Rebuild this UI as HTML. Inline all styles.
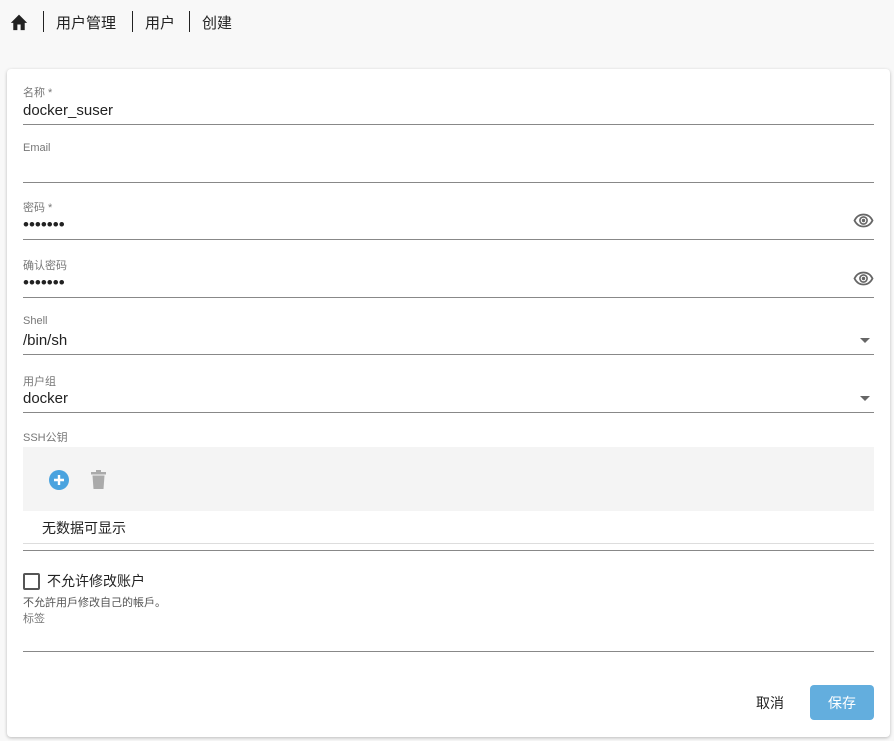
<!DOCTYPE html>
<html><head><meta charset="utf-8"><style>
body{margin:0;width:894px;height:741px;background:#f8f8f8;font-family:"Liberation Sans","Noto Sans CJK SC",sans-serif;position:relative;overflow:hidden;color:#222}
.a{position:absolute}
.bc{font-size:15px;top:12px;color:#222}
.sep{width:1px;height:21px;background:#222;top:11px}
.card{left:7px;top:69px;width:883px;height:668px;background:#fff;border-radius:4px;box-shadow:0 1px 3px rgba(0,0,0,.25)}
.lb{font-size:11px;color:#777;left:23px}
.v{font-size:15px;color:#222;left:23px}
.ln{left:23px;width:851px;height:1px;background:#888}
.dots{font-size:17px;letter-spacing:0px;left:23px;color:#222}
</style></head><body>
<svg class="a" style="left:9px;top:13px" width="20" height="18" viewBox="0 0 24 22"><path d="M10 21v-7h4v7h5v-9h3L12 2 2 12h3v9z" fill="#222"/></svg>
<div class="a sep" style="left:43px"></div>
<div class="a bc" style="left:56px">用户管理</div>
<div class="a sep" style="left:132px"></div>
<div class="a bc" style="left:145px">用户</div>
<div class="a sep" style="left:189px"></div>
<div class="a bc" style="left:202px">创建</div>
<div class="a card"></div>
<div class="a lb" style="top:84px">名称 *</div>
<div class="a v" style="top:102px">docker_suser</div>
<div class="a ln" style="top:124px"></div>
<div class="a lb" style="top:142px">Email</div>
<div class="a ln" style="top:182px"></div>
<div class="a lb" style="top:199px">密码 *</div>
<div class="a dots" style="top:215px">•••••••</div>
<div class="a ln" style="top:239px"></div>
<div class="a lb" style="top:257px">确认密码</div>
<div class="a dots" style="top:273px">•••••••</div>
<div class="a ln" style="top:297px"></div>
<svg class="a" style="left:853px;top:213px" width="21" height="15" viewBox="0 0 21 15"><path d="M1.5 7.5C3.5 3.5 7 1.5 10.5 1.5s7 2 9 6c-2 4-5.5 6-9 6s-7-2-9-6z" fill="none" stroke="#666" stroke-width="1.8"/><circle cx="10.5" cy="7.5" r="3.6" fill="none" stroke="#666" stroke-width="1.6"/><circle cx="10.5" cy="7.5" r="1.7" fill="#666"/></svg>
<svg class="a" style="left:853px;top:271px" width="21" height="15" viewBox="0 0 21 15"><path d="M1.5 7.5C3.5 3.5 7 1.5 10.5 1.5s7 2 9 6c-2 4-5.5 6-9 6s-7-2-9-6z" fill="none" stroke="#666" stroke-width="1.8"/><circle cx="10.5" cy="7.5" r="3.6" fill="none" stroke="#666" stroke-width="1.6"/><circle cx="10.5" cy="7.5" r="1.7" fill="#666"/></svg>
<div class="a lb" style="top:315px">Shell</div>
<div class="a v" style="top:332px">/bin/sh</div>
<div class="a ln" style="top:354px"></div>
<div class="a" style="left:860px;top:338px;border-left:5px solid transparent;border-right:5px solid transparent;border-top:5px solid #666"></div>
<div class="a lb" style="top:373px">用户组</div>
<div class="a v" style="top:390px">docker</div>
<div class="a ln" style="top:412px"></div>
<div class="a" style="left:860px;top:396px;border-left:5px solid transparent;border-right:5px solid transparent;border-top:5px solid #666"></div>
<div class="a lb" style="top:429px">SSH公钥</div>
<div class="a" style="left:23px;top:447px;width:851px;height:64px;background:#f4f4f4"></div>
<svg class="a" style="left:49px;top:470px" width="20" height="20" viewBox="0 0 20 20"><circle cx="10" cy="10" r="10" fill="#4aa3df"/><path d="M10 5v10M5 10h10" stroke="#fff" stroke-width="2.4"/></svg>
<svg class="a" style="left:91px;top:470px" width="15" height="19" viewBox="0 0 15 19"><rect x="0" y="2" width="15" height="2.5" fill="#aaa"/><rect x="5" y="0" width="5" height="3" fill="#aaa"/><path d="M1.5 5.5h12l-1 13.5h-10z" fill="#aaa"/></svg>
<div class="a" style="left:42px;top:518px;font-size:14px;color:#222">无数据可显示</div>
<div class="a" style="left:23px;top:543px;width:851px;height:1px;background:#ddd"></div>
<div class="a ln" style="top:550px"></div>
<div class="a" style="left:23px;top:573px;width:13px;height:13px;border:2px solid #555;border-radius:2px"></div>
<div class="a" style="left:47px;top:571px;font-size:14px;color:#222">不允许修改账户</div>
<div class="a" style="left:23px;top:594px;font-size:11px;color:#555">不允許用戶修改自己的帳戶。</div>
<div class="a lb" style="top:610px">标签</div>
<div class="a ln" style="top:651px"></div>
<div class="a" style="left:756px;top:693px;font-size:14px;color:#222">取消</div>
<div class="a" style="left:810px;top:685px;width:64px;height:35px;background:#63aede;border-radius:4px;color:#fff;font-size:14px;text-align:center;line-height:36px">保存</div>
</body></html>
